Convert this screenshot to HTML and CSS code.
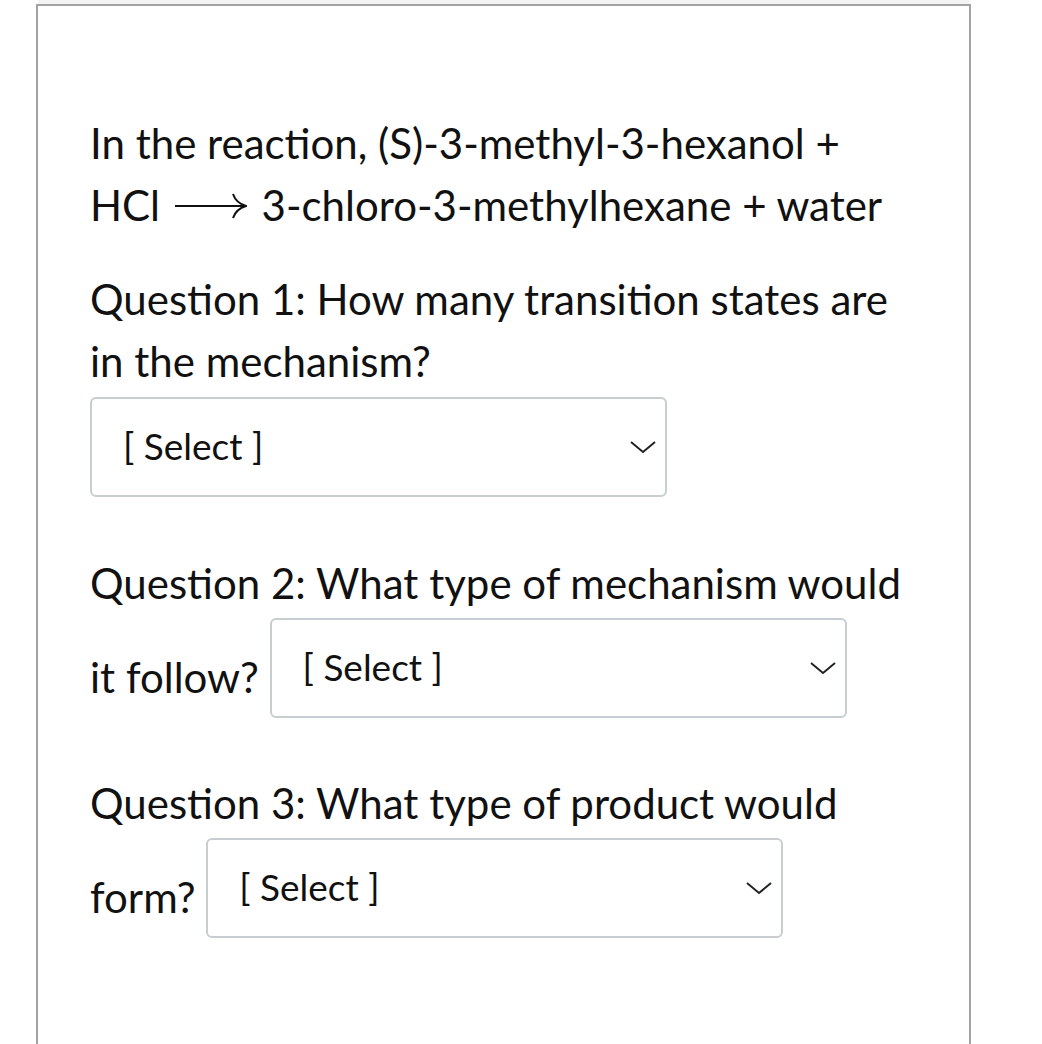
FILE: index.html
```html
<!DOCTYPE html>
<html>
<head>
<meta charset="utf-8">
<link rel="stylesheet" href="styles.css">
</head>
<body>
<div class="topstrip"></div>
<div class="card">
  <p class="para p1">In the reaction, (S)-3-methyl-3-hexanol + HCl <svg class="arrow" viewBox="0 0 72 28" width="72" height="28"><path d="M0 14 H70" stroke="#111" stroke-width="2" fill="none"/><path d="M58 2 Q61 11 71 14 Q61 17 58 26" stroke="#111" stroke-width="2" fill="none"/></svg> 3-chloro-3-methylhexane + water</p>
  <p class="para q1">Question 1: How many transition states are in the mechanism?</p>
  <div class="select block"><span class="sel-text">[ Select ]</span><svg class="chev" viewBox="0 0 26 14" width="26" height="14"><path d="M1 2 L13 12 L25 2" fill="none" stroke="#222" stroke-width="2"/></svg></div>
  <p class="para q2">Question 2: What type of mechanism would it follow? <span class="select inline"><span class="sel-text">[ Select ]</span><svg class="chev" viewBox="0 0 26 14" width="26" height="14"><path d="M1 2 L13 12 L25 2" fill="none" stroke="#222" stroke-width="2"/></svg></span></p>
  <p class="para q3">Question 3: What type of product would form? <span class="select inline"><span class="sel-text">[ Select ]</span><svg class="chev" viewBox="0 0 26 14" width="26" height="14"><path d="M1 2 L13 12 L25 2" fill="none" stroke="#222" stroke-width="2"/></svg></span></p>
</div>
</body>
</html>
```

FILE: styles.css
```css
html, body {
  margin: 0;
  padding: 0;
  background: #fff;
}
body {
  font-family: Lato, "Noto Sans", sans-serif;
  color: #111;
}
.topstrip {
  margin-left: 38px;
  width: 931px;
  height: 4px;
  background: #f3f3f3;
}
.card {
  margin-left: 36px;
  width: 935px;
  min-height: 1100px;
  border: 2px solid #a3a3a3;
  border-bottom: none;
  padding: 106px 52px 0 52px;
  box-sizing: border-box;
}
.para {
  margin: 0 0 32px 0;
  font-size: 42px;
  line-height: 62px;
  width: 820px;
}
.para.q1 {
  margin-bottom: 5px;
}
.para.q2 {
  margin-bottom: 54px;
}
.arrow {
  vertical-align: 1px;
  margin: 0 4px;
}
.select {
  display: inline-flex;
  align-items: center;
  box-sizing: border-box;
  width: 577px;
  height: 100px;
  border: 2px solid #c8cdd1;
  border-radius: 6px;
  padding: 0 9px 0 31px;
  font-size: 37px;
  line-height: 1;
  background: #fff;
}
.select.block {
  display: flex;
  margin: 0 0 55px 0;
}
.select.inline {
  margin-top: 4px;
  vertical-align: 12px;
}
.sel-text {
  flex: 1;
  padding-bottom: 4px;
}
.chev {
  display: block;
}
```
